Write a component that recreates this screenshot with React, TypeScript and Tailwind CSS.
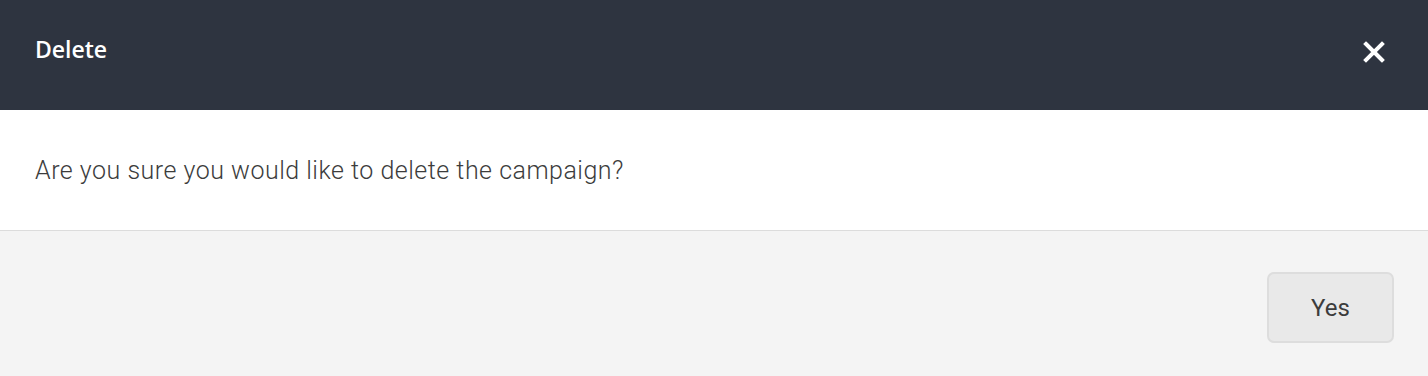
export default function App() {
  return (
    <div className="w-[1428px] h-[376px] flex flex-col bg-[#f4f4f4]">
      <header className="h-[110px] bg-[#2e3440] flex items-center justify-between pl-[35px] pr-[43px]">
        <h1 className="text-[23px] font-semibold text-white mb-[12px]" style={{ fontFamily: '"Open Sans", sans-serif' }}>
          Delete
        </h1>
        <button className="w-[22px] h-[22px] flex items-center justify-center mb-[6px]">
          <svg width="22" height="22" viewBox="0 0 22 22">
            <path d="M3 3 L19 19 M19 3 L3 19" stroke="#fff" strokeWidth="4" strokeLinecap="square" />
          </svg>
        </button>
      </header>
      <main className="h-[121px] bg-white border-b border-[#dcdcdc] flex items-center px-[35px]">
        <p
          className="text-[25px] font-light tracking-[0.5px] text-[#3c3c3c] pt-[2px]"
          style={{ fontFamily: 'Roboto, sans-serif' }}
        >
          Are you sure you would like to delete the campaign?
        </p>
      </main>
      <footer className="flex-1 flex justify-end items-start pt-[41px] pr-[34px]">
        <button
          className="w-[127px] h-[71px] rounded-[7px] border-2 border-[#dddddd] bg-[#e9e9e9] text-[24px] text-[#3c3c3c]"
          style={{ fontFamily: 'Roboto, sans-serif' }}
        >
          Yes
        </button>
      </footer>
    </div>
  );
}
